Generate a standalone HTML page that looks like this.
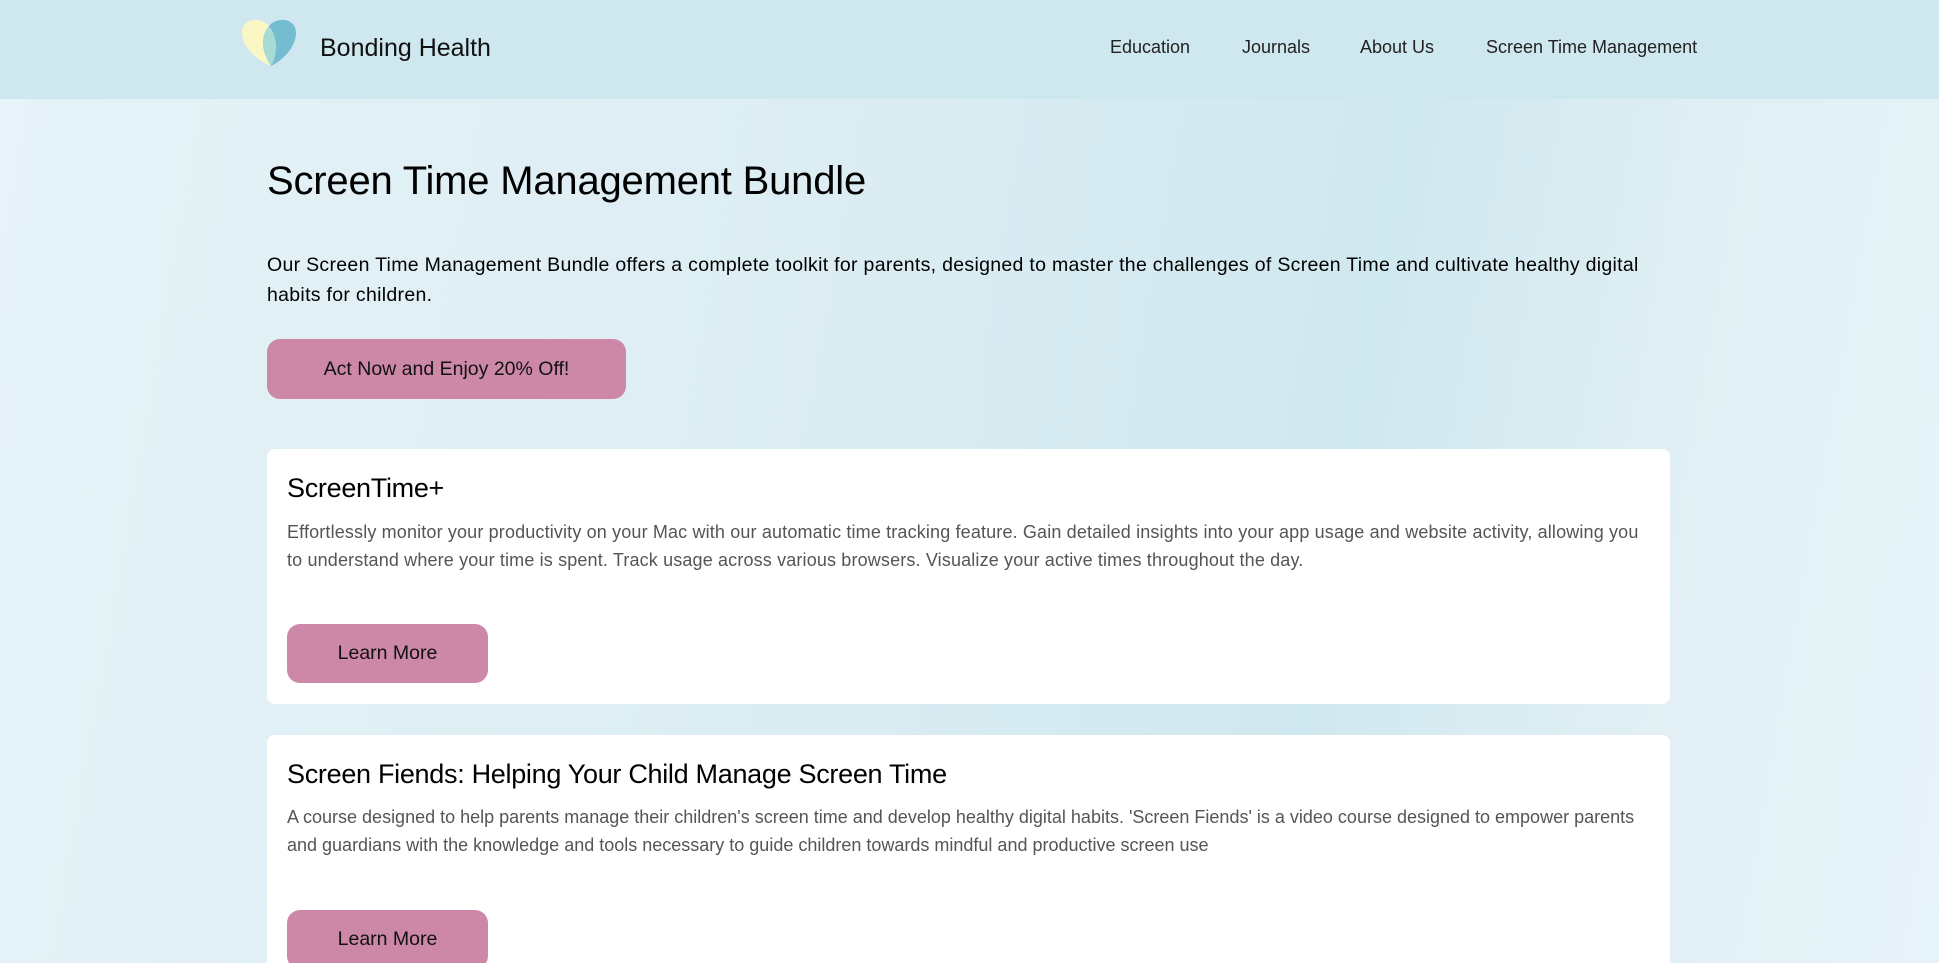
<!DOCTYPE html>
<html><head><meta charset="utf-8"><style>
*{margin:0;padding:0;box-sizing:border-box}
html,body{width:1939px;height:963px;overflow:hidden}
body{font-family:"Liberation Sans",sans-serif;color:#000;position:relative;
background:linear-gradient(100deg,#e6f3f8 0%,#dcedf3 40%,#d0e8ef 68%,#e2f0f5 85%,#e6f3f8 100%)}
header{height:99px;background:#cfe7ee;position:relative}
.logo{position:absolute;left:241px;top:18px}
.brand{position:absolute;left:320px;top:34px;font-size:25px;color:#111}
nav a{position:absolute;top:37px;font-size:18px;color:#222;text-decoration:none}
h1{position:absolute;left:267px;top:159px;font-size:40px;font-weight:normal;letter-spacing:-0.2px}
.intro{position:absolute;left:267px;top:250px;white-space:nowrap;font-size:19.5px;line-height:30px;letter-spacing:0.3px}
.btn{position:absolute;background:#cd88a8;border-radius:13px;font-size:19.5px;display:flex;align-items:center;justify-content:center;color:#111}
.card{position:absolute;left:267px;width:1403px;background:#fff;border-radius:8px}
.card h2{position:absolute;left:20px;font-size:27px;font-weight:normal;letter-spacing:-0.3px}
.card p{position:absolute;left:20px;white-space:nowrap;font-size:18px;line-height:28px;color:#555}
</style></head><body>
<header>
<svg class="logo" width="56" height="50" viewBox="0 0 56 50">
<path d="M28 8 C20 -2 0 0 1 16 C2 30 16 42 30 48 C22 36 18 20 28 8Z" fill="#fbf7c4"/>
<path d="M28 8 C36 -2 56 0 55 16 C54 30 42 42 30 48 C22 36 18 20 28 8Z" fill="#74bcd0"/>
<path d="M28 8 C18 20 22 36 30 48 C36 38 38 20 28 8Z" fill="#a8dbd3"/>
</svg>
<div class="brand">Bonding Health</div>
<nav><a style="left:1110px">Education</a><a style="left:1242px">Journals</a><a style="left:1360px">About Us</a><a style="left:1486px">Screen Time Management</a></nav>
</header>
<h1>Screen Time Management Bundle</h1>
<div class="intro">Our Screen Time Management Bundle offers a complete toolkit for parents, designed to master the challenges of Screen Time and cultivate healthy digital<br>habits for children.</div>
<div class="btn" style="left:267px;top:339px;width:359px;height:60px">Act Now and Enjoy 20% Off!</div>
<div class="card" style="top:449px;height:255px">
<h2 style="top:24px">ScreenTime+</h2>
<p style="top:69px;letter-spacing:0.15px">Effortlessly monitor your productivity on your Mac with our automatic time tracking feature. Gain detailed insights into your app usage and website activity, allowing you<br>to understand where your time is spent. Track usage across various browsers. Visualize your active times throughout the day.</p>
<div class="btn" style="left:20px;top:175px;width:201px;height:59px">Learn More</div>
</div>
<div class="card" style="top:735px;height:228px;border-radius:8px 8px 0 0">
<h2 style="top:24px">Screen Fiends: Helping Your Child Manage Screen Time</h2>
<p style="top:68px">A course designed to help parents manage their children's screen time and develop healthy digital habits. 'Screen Fiends' is a video course designed to empower parents<br>and guardians with the knowledge and tools necessary to guide children towards mindful and productive screen use</p>
<div class="btn" style="left:20px;top:175px;width:201px;height:59px">Learn More</div>
</div>
</body></html>
